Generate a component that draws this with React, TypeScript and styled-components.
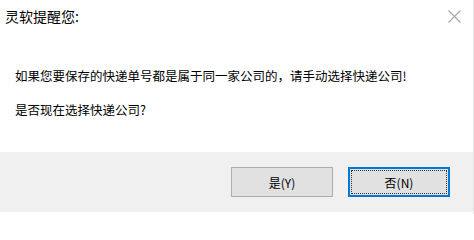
import * as React from 'react';
import styled, { createGlobalStyle } from 'styled-components';

const GlobalStyle = createGlobalStyle`
  html, body {
    margin: 0;
    padding: 0;
    background: #ffffff;
  }
  body {
    font-family: "Noto Sans CJK SC", "Microsoft YaHei", sans-serif;
    color: #000;
  }
`;

const App: React.FC = () => {
  return (
    <>
      <GlobalStyle />
      <Dialog>
        <TitleBar>
          <Title>灵软提醒您:</Title>
          <CloseButton aria-label="关闭">
            <svg width="13" height="13" viewBox="0 0 13 13">
              <path d="M0.5 0.5 L12.5 12.5 M12.5 0.5 L0.5 12.5" stroke="#a8a8a8" strokeWidth="1.1" />
            </svg>
          </CloseButton>
        </TitleBar>
        <Content>
          <Message>如果您要保存的快递单号都是属于同一家公司的，请手动选择快递公司!</Message>
          <Message>是否现在选择快递公司?</Message>
        </Content>
        <Footer>
          <Button>是(Y)</Button>
          <Button primary>否(N)</Button>
        </Footer>
        <BottomEdge />
      </Dialog>
    </>
  );
};

export default App;

const Dialog = styled.div`
  width: 473px;
  height: 214px;
  display: flex;
  flex-direction: column;
  background: #ffffff;
  border-right: 1px solid #e6e6e6;
`;

const TitleBar = styled.div`
  height: 32px;
  display: flex;
  align-items: center;
  justify-content: space-between;
  padding: 0 12px 0 5px;
`;

const Title = styled.span`
  font-size: 14px;
  line-height: 20px;
`;

const CloseButton = styled.button`
  border: none;
  background: transparent;
  padding: 0;
  width: 13px;
  height: 13px;
  display: flex;
`;

const Content = styled.div`
  flex: 1;
  display: flex;
  flex-direction: column;
  gap: 14px;
  padding: 34px 15px 0;
`;

const Message = styled.p`
  margin: 0;
  font-size: 12.5px;
  line-height: 20px;
  color: #000;
`;

const Footer = styled.div`
  height: 60px;
  background: #f0f0f0;
  display: flex;
  align-items: center;
  justify-content: flex-end;
  gap: 15px;
  padding-right: 23px;
`;

const Button = styled.button<{ primary?: boolean }>`
  position: relative;
  width: 102px;
  height: 30px;
  box-sizing: border-box;
  background: #e1e1e1;
  border: ${(p) => (p.primary ? '2px solid #0078d7' : '1px solid #adadad')};
  font-family: "Noto Sans CJK SC", "Microsoft YaHei", sans-serif;
  font-size: 12px;
  color: #000;
  padding: 0;

  &::after {
    content: '';
    display: ${(p) => (p.primary ? 'block' : 'none')};
    position: absolute;
    inset: 1px;
    border: 1px dotted #333;
  }
`;

const BottomEdge = styled.div`
  height: 2px;
  background: #ffffff;
`;
